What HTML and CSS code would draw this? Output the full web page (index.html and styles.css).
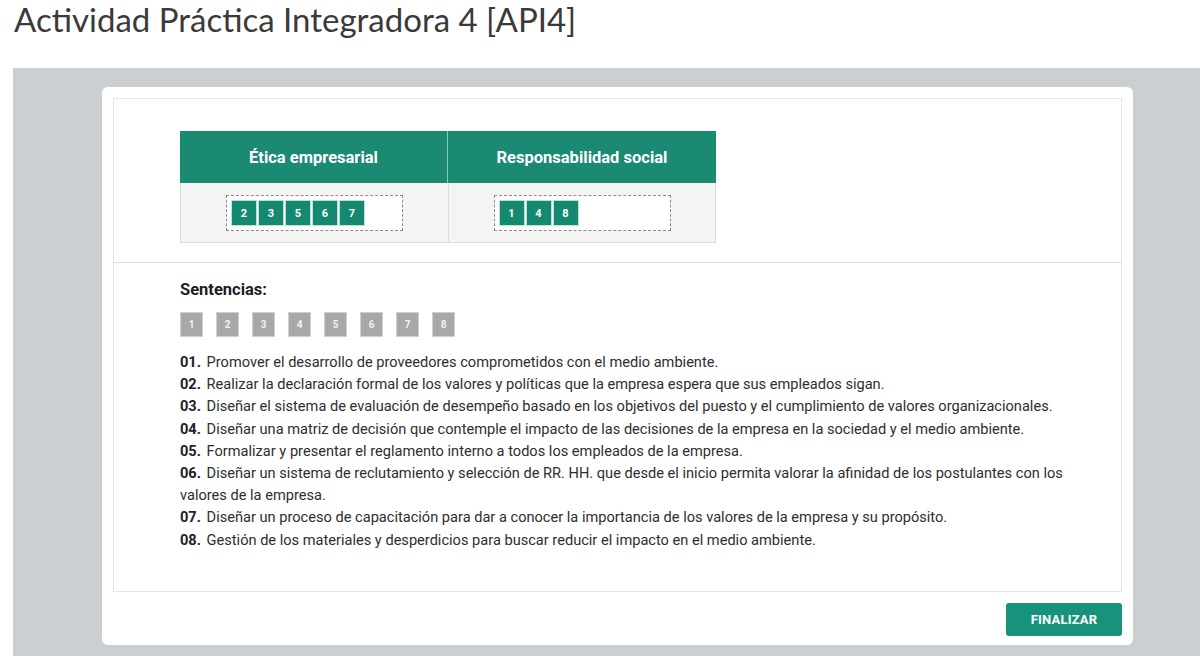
FILE: index.html
```html
<!DOCTYPE html>
<html lang="es">
<head>
<meta charset="utf-8">
<title>Actividad Práctica Integradora 4 [API4]</title>
<link rel="stylesheet" href="styles.css">
</head>
<body>
<h1 class="title">Actividad Práctica Integradora 4 [API4]</h1>
<div class="stage">
  <div class="card">
    <div class="panel">
      <div class="top">
        <div class="table">
          <div class="th">Ética empresarial</div>
          <div class="th th-last">Responsabilidad social</div>
          <div class="td">
            <div class="drop">
              <span class="chip">2</span><span class="chip">3</span><span class="chip">5</span><span class="chip">6</span><span class="chip">7</span>
            </div>
          </div>
          <div class="td td-last">
            <div class="drop">
              <span class="chip">1</span><span class="chip">4</span><span class="chip">8</span>
            </div>
          </div>
        </div>
      </div>
      <div class="bottom">
        <h2 class="label">Sentencias:</h2>
        <div class="pool">
          <span class="gchip">1</span><span class="gchip">2</span><span class="gchip">3</span><span class="gchip">4</span><span class="gchip">5</span><span class="gchip">6</span><span class="gchip">7</span><span class="gchip">8</span>
        </div>
        <div class="list">
          <p><b>01.</b> Promover el desarrollo de proveedores comprometidos con el medio ambiente.</p>
          <p><b>02.</b> Realizar la declaración formal de los valores y políticas que la empresa espera que sus empleados sigan.</p>
          <p><b>03.</b> Diseñar el sistema de evaluación de desempeño basado en los objetivos del puesto y el cumplimiento de valores organizacionales.</p>
          <p><b>04.</b> Diseñar una matriz de decisión que contemple el impacto de las decisiones de la empresa en la sociedad y el medio ambiente.</p>
          <p><b>05.</b> Formalizar y presentar el reglamento interno a todos los empleados de la empresa.</p>
          <p><b>06.</b> Diseñar un sistema de reclutamiento y selección de RR. HH. que desde el inicio permita valorar la afinidad de los postulantes con los valores de la empresa.</p>
          <p><b>07.</b> Diseñar un proceso de capacitación para dar a conocer la importancia de los valores de la empresa y su propósito.</p>
          <p><b>08.</b> Gestión de los materiales y desperdicios para buscar reducir el impacto en el medio ambiente.</p>
        </div>
      </div>
    </div>
    <div class="actions">
      <button class="btn" type="button">FINALIZAR</button>
    </div>
  </div>
</div>
</body>
</html>
```
FILE: styles.css
```css
html, body {
  margin: 0;
  padding: 0;
  background: #ffffff;
}
body {
  font-family: Roboto, "Liberation Sans", Arial, sans-serif;
  color: #333333;
  overflow: hidden;
}
.title {
  margin: 0;
  height: 68px;
  box-sizing: border-box;
  padding: 0 0 0 14px;
  font-family: Lato, "Open Sans", sans-serif;
  font-weight: 400;
  font-size: 33px;
  line-height: 38px;
  color: #3a3a3a;
}
.stage {
  margin-left: 13px;
  background: #cccfd2;
  padding: 19px 67px 40px 89px;
}
.card {
  background: #ffffff;
  border-radius: 6px;
  padding: 11px 11px 9px 11px;
}
.panel {
  border: 1px solid #e6e6e6;
}
.top {
  padding: 32px 0 19px 66px;
  border-bottom: 1px solid #dcdcdc;
}
.table {
  display: grid;
  grid-template-columns: 268px 268px;
  width: 536px;
}
.th {
  height: 52px;
  background: #1a8a73;
  color: #ffffff;
  font-weight: 700;
  font-size: 16.5px;
  display: flex;
  align-items: center;
  justify-content: center;
  border-right: 1px solid #8cc6b8;
}
.th-last {
  border-right: none;
}
.td {
  height: 60px;
  box-sizing: border-box;
  background: #f4f4f4;
  border-bottom: 1px solid #dedede;
  border-left: 1px solid #dedede;
  display: flex;
  align-items: flex-start;
  justify-content: center;
  padding-top: 12px;
}
.td-last {
  border-right: 1px solid #dedede;
}
.drop {
  width: 177px;
  height: 36px;
  box-sizing: border-box;
  border: 1px dashed #8a8a8a;
  background: #ffffff;
  display: flex;
  gap: 1px;
  padding: 4px 0 0 4px;
}
.chip {
  width: 26px;
  height: 26px;
  box-sizing: border-box;
  background: #14896f;
  border: 1px solid #b9e2d8;
  color: #ffffff;
  font-weight: 700;
  font-size: 11px;
  display: flex;
  align-items: center;
  justify-content: center;
}
.bottom {
  padding: 15px 10px 40px 66px;
}
.label {
  margin: 0;
  font-size: 16.5px;
  font-weight: 700;
  line-height: 24px;
  color: #1e1e1e;
}
.pool {
  display: flex;
  gap: 13px;
  margin-top: 10px;
}
.gchip {
  width: 23px;
  height: 25px;
  box-sizing: border-box;
  background: #a8a8a8;
  border: 1px solid #cfcfcf;
  color: #f2f2f2;
  font-weight: 700;
  font-size: 10px;
  display: flex;
  align-items: center;
  justify-content: center;
}
.list {
  margin-top: 14px;
  font-size: 14.6px;
  line-height: 22.2px;
  color: #2e2e2e;
}
.list p {
  margin: 0;
}
.list b {
  font-weight: 700;
  color: #222222;
  margin-right: 2px;
}
.actions {
  display: flex;
  justify-content: flex-end;
  margin-top: 11px;
}
.btn {
  width: 116px;
  height: 33px;
  border: none;
  border-radius: 3px;
  background: #16937a;
  color: #ffffff;
  font-family: Roboto, "Liberation Sans", Arial, sans-serif;
  font-weight: 700;
  font-size: 13px;
  letter-spacing: 0.2px;
}
```
